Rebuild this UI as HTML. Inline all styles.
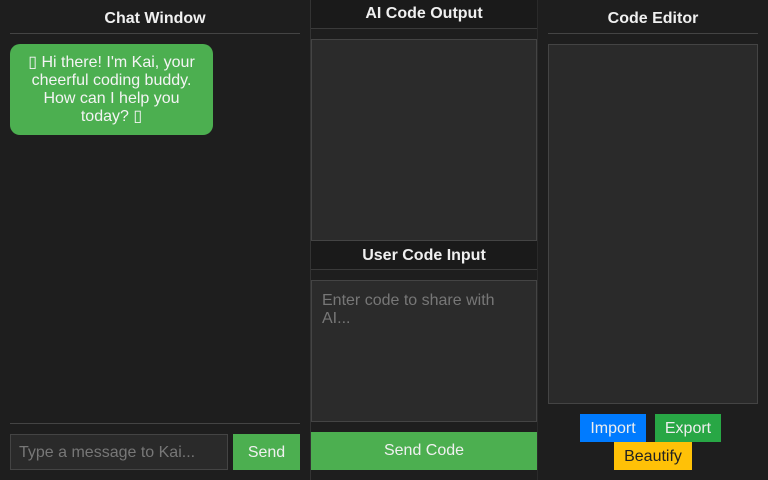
<!DOCTYPE html>
<html><head><style>
*{box-sizing:border-box;margin:0;padding:0}
body{width:768px;height:480px;background:#1e1e1e;font-family:"Liberation Sans",sans-serif;color:#fff;position:relative;overflow:hidden}
.a{position:absolute}
h2{position:absolute;font-size:16px;font-weight:bold;text-align:center;color:#f0f0f0}
</style></head><body>
<div class="a" style="left:310px;top:0;width:1px;height:480px;background:#333"></div>
<div class="a" style="left:537px;top:0;width:1px;height:480px;background:#2a2a2a"></div>
<h2 style="left:10px;width:290px;top:10px">Chat Window</h2>
<div class="a" style="left:10px;top:33px;width:290px;height:1px;background:#444"></div>
<div class="a" style="left:10px;top:44px;width:203px;height:91px;background:#4caf50;border-radius:10px;font-size:16px;line-height:18px;text-align:center;padding:10px 10px;color:#f4f4f4">▯ Hi there! I'm Kai, your cheerful coding buddy. How can I help you today? ▯</div>
<div class="a" style="left:10px;top:423px;width:290px;height:1px;background:#444"></div>
<div class="a" style="left:10px;top:434px;width:218px;height:36px;background:#2a2a2a;border:1px solid #444;color:#777;font-size:16px;line-height:35px;padding-left:8px">Type a message to Kai...</div>
<div class="a" style="left:233px;top:434px;width:67px;height:36px;background:#4caf50;color:#f0f0f0;font-size:16px;line-height:37px;text-align:center">Send</div>

<div class="a" style="left:311px;top:0;width:226px;height:29px;background:#1a1a1a;border-bottom:1px solid #3a3a3a"></div>
<h2 style="left:311px;width:226px;top:5px">AI Code Output</h2>
<div class="a" style="left:311px;top:39px;width:226px;height:202px;background:#2b2b2b;border:1px solid #444"></div>
<div class="a" style="left:311px;top:241px;width:226px;height:29px;background:#1a1a1a;border-bottom:1px solid #3a3a3a"></div>
<h2 style="left:311px;width:226px;top:247px">User Code Input</h2>
<div class="a" style="left:311px;top:280px;width:226px;height:142px;background:#2b2b2b;border:1px solid #444;color:#777;font-size:16px;line-height:18px;padding:11px 10px">Enter code to share with AI...</div>
<div class="a" style="left:311px;top:432px;width:226px;height:38px;background:#4caf50;color:#f0f0f0;font-size:16px;line-height:38px;text-align:center">Send Code</div>

<h2 style="left:548px;width:210px;top:10px">Code Editor</h2>
<div class="a" style="left:548px;top:33px;width:210px;height:1px;background:#444"></div>
<div class="a" style="left:548px;top:44px;width:210px;height:360px;background:#2a2a2a;border:1px solid #444"></div>
<div class="a" style="left:580px;top:414px;width:66px;height:28px;background:#007bff;color:#eee;font-size:16px;line-height:29px;text-align:center">Import</div>
<div class="a" style="left:655px;top:414px;width:66px;height:28px;background:#28a745;color:#eee;font-size:16px;line-height:29px;text-align:center">Export</div>
<div class="a" style="left:614px;top:442px;width:78px;height:28px;background:#ffc107;color:#222;font-size:16px;line-height:29px;text-align:center">Beautify</div>
</body></html>
